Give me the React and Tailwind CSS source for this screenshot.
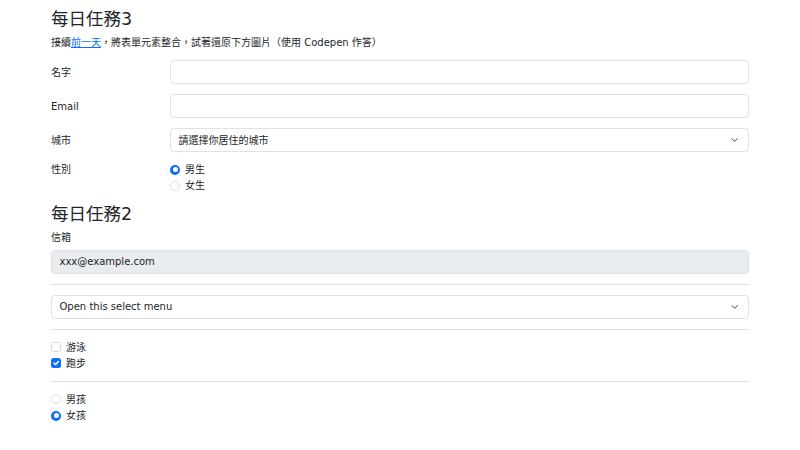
import React from "react";

const FONT = { fontFamily: '"DejaVu Sans", "Noto Sans CJK TC", sans-serif' };

function Chevron() {
  return (
    <svg width="7.5" height="7.5" viewBox="0 0 16 16" className="absolute right-[9.75px] top-1/2 -translate-y-1/2">
      <path fill="none" stroke="#343a40" strokeLinecap="round" strokeLinejoin="round" strokeWidth="2" d="m2 5 6 6 6-6" />
    </svg>
  );
}

function Radio({ checked, label }) {
  return (
    <div className="flex items-center h-[15px] mb-[1.25px]">
      {checked ? (
        <span className="w-[10px] h-[10px] rounded-full bg-[#0d6efd] flex items-center justify-center shrink-0">
          <span className="w-[5px] h-[5px] rounded-full bg-white" />
        </span>
      ) : (
        <span className="w-[10px] h-[10px] rounded-full border border-[#dee2e6] bg-white shrink-0" />
      )}
      <span className="ml-[5px]">{label}</span>
    </div>
  );
}

function Check({ checked, label }) {
  return (
    <div className="flex items-center h-[15px] mb-[1.25px]">
      {checked ? (
        <span className="w-[10px] h-[10px] rounded-[2.5px] bg-[#0d6efd] flex items-center justify-center shrink-0">
          <svg width="10" height="10" viewBox="0 0 20 20">
            <path fill="none" stroke="#fff" strokeLinecap="round" strokeLinejoin="round" strokeWidth="3" d="m6 10 3 3 6-6" />
          </svg>
        </span>
      ) : (
        <span className="w-[10px] h-[10px] rounded-[2.5px] border border-[#d6d9dd] bg-white shrink-0" />
      )}
      <span className="ml-[5px]">{label}</span>
    </div>
  );
}

function Box({ children, select, disabled }) {
  return (
    <div
      className={`relative h-[24px] rounded-[3.75px] border border-[#dee2e6] px-[7.5px] flex items-center ${
        disabled ? "bg-[#e9ecef]" : "bg-white"
      }`}
    >
      <span>{children}</span>
      {select && <Chevron />}
    </div>
  );
}

export default function App() {
  return (
    <div className="min-h-[450px] bg-white text-[#212529] text-[10px] leading-[15px]" style={FONT}>
      <div className="w-[698px] ml-[51px] pt-[9px]">
        <h3 className="text-[17.5px] leading-[21px] mb-[5px]">每日任務3</h3>
        <p className="mb-[10px]">
          接續<a className="text-[#0d6efd] underline">前一天</a>，將表單元素整合，試著還原下方圖片（使用 Codepen 作答）
        </p>
        <div className="grid grid-cols-[119px_1fr] mb-[10px]">
          <div className="pt-[4.75px]">名字</div>
          <Box />
        </div>
        <div className="grid grid-cols-[119px_1fr] mb-[10px]">
          <div className="pt-[4.75px]">Email</div>
          <Box />
        </div>
        <div className="grid grid-cols-[119px_1fr] mb-[10px]">
          <div className="pt-[4.75px]">城市</div>
          <Box select>請選擇你居住的城市</Box>
        </div>
        <div className="grid grid-cols-[119px_1fr] mb-[9px]">
          <div>性別</div>
          <div>
            <Radio checked label="男生" />
            <Radio label="女生" />
          </div>
        </div>

        <h3 className="text-[17.5px] leading-[21px] mb-[5px]">每日任務2</h3>
        <div className="mb-[5px]">信箱</div>
        <Box disabled>xxx@example.com</Box>
        <hr className="my-[10px] border-0 border-t border-[#dfdfdf]" />
        <Box select>Open this select menu</Box>
        <hr className="my-[10px] border-0 border-t border-[#dfdfdf]" />
        <Check label="游泳" />
        <Check checked label="跑步" />
        <hr className="my-[10px] border-0 border-t border-[#dfdfdf]" />
        <Radio label="男孩" />
        <Radio checked label="女孩" />
      </div>
    </div>
  );
}
